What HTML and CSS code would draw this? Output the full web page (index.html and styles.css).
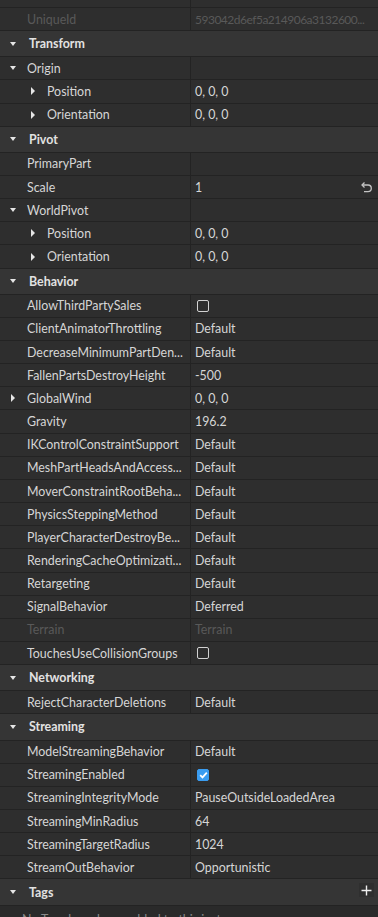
FILE: index.html
```html
<!DOCTYPE html>
<html lang="en">
<head>
  <meta charset="utf-8" />
  <meta name="viewport" content="width=device-width, initial-scale=1" />
  <title>Properties</title>
  <link rel="stylesheet" href="styles.css">
</head>
<body>
  <div class="panel">
    <div class="row top-cut"><div class="name"></div><div class="value"></div></div>
    <div class="row disabled"><div class="name"><span class="caret"></span>UniqueId</div><div class="value"><span class="hash">593042d6ef5a214906a3132600...</span></div></div>

    <div class="group"><span class="caret down"></span>Transform</div>
    <div class="row"><div class="name"><span class="caret down"></span>Origin</div><div class="value"></div></div>
    <div class="row child"><div class="name"><span class="caret right"></span>Position</div><div class="value">0, 0, 0</div></div>
    <div class="row child"><div class="name"><span class="caret right"></span>Orientation</div><div class="value">0, 0, 0</div></div>

    <div class="group"><span class="caret down"></span>Pivot</div>
    <div class="row"><div class="name"><span class="caret"></span>PrimaryPart</div><div class="value"></div></div>
    <div class="row"><div class="name"><span class="caret"></span>Scale</div>
      <div class="value">1
        <svg class="revert" width="13" height="12" viewBox="0 0 13 12" fill="none" stroke="#c4c4c4" stroke-width="1.3">
          <path d="M4.5 1.5 L2 4 L4.5 6.5" />
          <path d="M2.2 4 H8 a3.3 3.3 0 0 1 0 6.6 H4" />
        </svg>
      </div>
    </div>
    <div class="row"><div class="name"><span class="caret down"></span>WorldPivot</div><div class="value"></div></div>
    <div class="row child"><div class="name"><span class="caret right"></span>Position</div><div class="value">0, 0, 0</div></div>
    <div class="row child"><div class="name"><span class="caret right"></span>Orientation</div><div class="value">0, 0, 0</div></div>

    <div class="group"><span class="caret down"></span>Behavior</div>
    <div class="row"><div class="name"><span class="caret"></span>AllowThirdPartySales</div><div class="value"><span class="check"></span></div></div>
    <div class="row"><div class="name"><span class="caret"></span>ClientAnimatorThrottling</div><div class="value">Default</div></div>
    <div class="row"><div class="name"><span class="caret"></span>DecreaseMinimumPartDen...</div><div class="value">Default</div></div>
    <div class="row"><div class="name"><span class="caret"></span>FallenPartsDestroyHeight</div><div class="value">-500</div></div>
    <div class="row"><div class="name"><span class="caret right"></span>GlobalWind</div><div class="value">0, 0, 0</div></div>
    <div class="row"><div class="name"><span class="caret"></span>Gravity</div><div class="value">196.2</div></div>
    <div class="row"><div class="name"><span class="caret"></span>IKControlConstraintSupport</div><div class="value">Default</div></div>
    <div class="row"><div class="name"><span class="caret"></span>MeshPartHeadsAndAccess...</div><div class="value">Default</div></div>
    <div class="row"><div class="name"><span class="caret"></span>MoverConstraintRootBeha...</div><div class="value">Default</div></div>
    <div class="row"><div class="name"><span class="caret"></span>PhysicsSteppingMethod</div><div class="value">Default</div></div>
    <div class="row"><div class="name"><span class="caret"></span>PlayerCharacterDestroyBe...</div><div class="value">Default</div></div>
    <div class="row"><div class="name"><span class="caret"></span>RenderingCacheOptimizati...</div><div class="value">Default</div></div>
    <div class="row"><div class="name"><span class="caret"></span>Retargeting</div><div class="value">Default</div></div>
    <div class="row"><div class="name"><span class="caret"></span>SignalBehavior</div><div class="value">Deferred</div></div>
    <div class="row disabled"><div class="name"><span class="caret"></span>Terrain</div><div class="value">Terrain</div></div>
    <div class="row"><div class="name"><span class="caret"></span>TouchesUseCollisionGroups</div><div class="value"><span class="check"></span></div></div>

    <div class="group"><span class="caret down"></span>Networking</div>
    <div class="row"><div class="name"><span class="caret"></span>RejectCharacterDeletions</div><div class="value">Default</div></div>

    <div class="group"><span class="caret down"></span>Streaming</div>
    <div class="row"><div class="name"><span class="caret"></span>ModelStreamingBehavior</div><div class="value">Default</div></div>
    <div class="row"><div class="name"><span class="caret"></span>StreamingEnabled</div>
      <div class="value">
        <span class="check on">
          <svg width="9" height="8" viewBox="0 0 9 8" fill="none" stroke="#fff" stroke-width="1.8"><path d="M1.2 4.2 L3.5 6.4 L7.8 1.6" /></svg>
        </span>
      </div>
    </div>
    <div class="row"><div class="name"><span class="caret"></span>StreamingIntegrityMode</div><div class="value">PauseOutsideLoadedArea</div></div>
    <div class="row"><div class="name"><span class="caret"></span>StreamingMinRadius</div><div class="value">64</div></div>
    <div class="row"><div class="name"><span class="caret"></span>StreamingTargetRadius</div><div class="value">1024</div></div>
    <div class="row"><div class="name"><span class="caret"></span>StreamOutBehavior</div><div class="value">Opportunistic</div></div>

    <div class="group"><span class="caret down"></span>Tags
      <span class="add">
        <svg width="11" height="11" viewBox="0 0 11 11" stroke="#eee" stroke-width="1.4"><path d="M5.5 0.5 V10.5 M0.5 5.5 H10.5" /></svg>
      </span>
    </div>
    <div class="empty">No Tags have been added to this instance</div>
  </div>
</body>
</html>
```

FILE: styles.css
```css
body {
  margin: 0;
  padding: 0;
  background-color: #2e2e2e;
  font-family: Lato, "Liberation Sans", sans-serif;
  font-size: 12.4px;
  color: #d6d6d6;
}
.panel {
  width: 378px;
  height: 917px;
  overflow: hidden;
  background-color: #2e2e2e;
}
.row {
  display: grid;
  grid-template-columns: 191px 1fr;
  height: 23.17px;
  box-sizing: border-box;
  border-bottom: 1px solid #232323;
}
.row.top-cut {
  height: 8px;
}
.name,
.value {
  display: flex;
  align-items: center;
  white-space: nowrap;
  overflow: hidden;
}
.name {
  padding-left: 8px;
  border-right: 1px solid #232323;
}
.value {
  padding-left: 4px;
  padding-right: 5px;
}
.hash {
  font-size: 12px;
  letter-spacing: -0.5px;
}
.row.child .name {
  padding-left: 28px;
}
.row.disabled {
  color: #595959;
}
.caret {
  flex: none;
  width: 19px;
  height: 8px;
  position: relative;
}
.caret.down::before,
.caret.right::before {
  content: "";
  position: absolute;
  width: 0;
  height: 0;
}
.caret.down::before {
  left: 2px;
  top: 2px;
  border-left: 3.5px solid transparent;
  border-right: 3.5px solid transparent;
  border-top: 4.5px solid #e6e6e6;
}
.caret.right::before {
  left: 3px;
  top: 0;
  border-top: 4px solid transparent;
  border-bottom: 4px solid transparent;
  border-left: 4.5px solid #e6e6e6;
}
.group {
  display: flex;
  align-items: center;
  height: 26.1px;
  box-sizing: border-box;
  padding-left: 8px;
  padding-right: 4px;
  background-color: #353535;
  border-bottom: 1px solid #232323;
  font-weight: bold;
  color: #e2e2e2;
}
.group .caret {
  width: 21px;
}
.check {
  display: inline-flex;
  align-items: center;
  justify-content: center;
  width: 12px;
  height: 12px;
  margin-left: 2px;
  box-sizing: border-box;
  border: 1px solid #d2d2d2;
  border-radius: 2px;
}
.check.on {
  background-color: #3a9cf0;
  border-color: #3a9cf0;
}
.revert {
  margin-left: auto;
}
.add {
  margin-left: auto;
  display: flex;
  align-items: center;
  justify-content: center;
  width: 15px;
  height: 14px;
  background-color: #2f2f2f;
  margin-top: -4px;
}
.empty {
  height: 24px;
  padding: 6px 0 0 22px;
  box-sizing: border-box;
  background-color: #2a2a2a;
  color: #8a8a8a;
  white-space: nowrap;
}
```
